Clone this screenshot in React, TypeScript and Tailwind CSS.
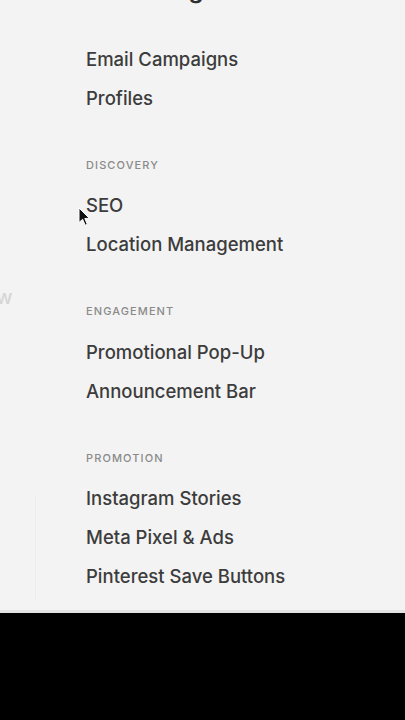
import React from "react";

interface Section {
  title?: string;
  items: string[];
}

const sections: Section[] = [
  { items: ["Email Campaigns", "Profiles"] },
  { title: "DISCOVERY", items: ["SEO", "Location Management"] },
  { title: "ENGAGEMENT", items: ["Promotional Pop-Up", "Announcement Bar"] },
  { title: "PROMOTION", items: ["Instagram Stories", "Meta Pixel & Ads", "Pinterest Save Buttons"] },
];

function Cursor() {
  return (
    <svg
      className="absolute left-[78px] top-[207px]"
      width="12"
      height="20"
      viewBox="0 0 12 20"
    >
      <path
        d="M1 1 L1 15.5 L4.6 12.3 L7.2 18.2 L9.3 17.3 L6.8 11.5 L11.3 11.3 Z"
        fill="#111"
        stroke="#fff"
        strokeWidth="1"
        strokeLinejoin="round"
      />
    </svg>
  );
}

export default function App() {
  return (
    <div
      className="w-full h-[720px] flex flex-col bg-black"
      style={{ fontFamily: "Inter, 'Liberation Sans', sans-serif" }}
    >
      <div className="relative h-[613px] bg-[#f3f3f3] overflow-hidden border-b-[3px] border-[#e2e2e2]">
        {/* faint ghost content behind the menu */}
        <span className="absolute left-[-4px] top-[282px] text-[20px] font-medium text-[#d6d6d6]">
          w
        </span>
        <div className="absolute left-[35px] top-[496px] w-px h-[104px] bg-[#ececec]" />

        <nav className="pl-[86px] flex flex-col">
          <h2 className="mt-[-22.5px] text-[24px] leading-[24px] font-semibold text-[#2e2e2e] tracking-[0px]">
            Marketing
          </h2>
          <div className="mt-[38px] flex flex-col gap-[39px]">
            {sections.map((s, i) => (
              <div key={i} className="flex flex-col">
                {s.title && (
                  <div className="text-[11px] leading-[16px] font-medium tracking-[0.1em] text-[#8a8a8a] mb-[13.5px]">
                    {s.title}
                  </div>
                )}
                {s.items.map((item) => (
                  <div
                    key={item}
                    className="text-[18.5px] leading-[39px] font-medium text-[#3c3c3c]"
                  >
                    {item}
                  </div>
                ))}
              </div>
            ))}
          </div>
        </nav>

        <Cursor />
      </div>
      <div className="flex-1 bg-black" />
    </div>
  );
}
